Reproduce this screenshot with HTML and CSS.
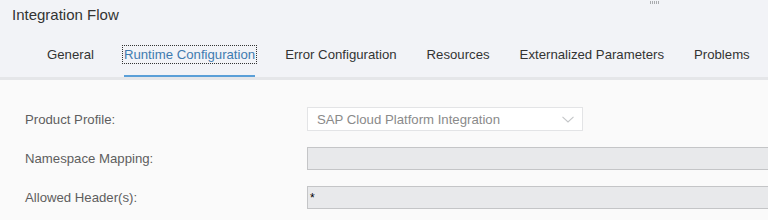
FILE: index.html
```html
<!DOCTYPE html>
<html lang="en">
<head>
    <meta charset="UTF-8">
    <meta name="viewport" content="width=device-width, initial-scale=1.0">
    <title>Integration Flow</title>
    <link rel="stylesheet" href="styles.css">
</head>
<body>
    <div class="header">
        <div class="grip"></div>
        <h1 class="title">Integration Flow</h1>
        <div class="tabs">
            <div class="tab"><span class="tab-text">General</span></div>
            <div class="tab active"><span class="tab-text"><span class="focus">Runtime Configuration</span></span></div>
            <div class="tab"><span class="tab-text">Error Configuration</span></div>
            <div class="tab"><span class="tab-text">Resources</span></div>
            <div class="tab"><span class="tab-text">Externalized Parameters</span></div>
            <div class="tab"><span class="tab-text">Problems</span></div>
        </div>
    </div>

    <div class="content">
        <div class="row">
            <div class="label">Product Profile:</div>
            <div class="select">
                <span>SAP Cloud Platform Integration</span>
                <svg class="chevron" width="12" height="7" viewBox="0 0 12 7">
                    <path d="M0.5 0.8 L6 6 L11.5 0.8" fill="none" stroke="#c4c6c8" stroke-width="1.1"/>
                </svg>
            </div>
        </div>
        <div class="row">
            <div class="label">Namespace Mapping:</div>
            <div class="input"></div>
        </div>
        <div class="row">
            <div class="label">Allowed Header(s):</div>
            <div class="input">*</div>
        </div>
    </div>
</body>
</html>
```

FILE: styles.css
```css
body {
    margin: 0;
    font-family: "Liberation Sans", Arial, sans-serif;
    background: #fafafa;
    color: #333;
    overflow: hidden;
}
.header {
    position: relative;
    background: #f2f3f7;
    border-bottom: 3px solid #e5e6e9;
}
.grip {
    position: absolute;
    left: 650px;
    top: 1px;
    width: 10px;
    height: 3px;
    background: repeating-linear-gradient(90deg, #a9abae 0 1px, transparent 1px 2px);
}
.title {
    margin: 0;
    padding: 6px 0 0 12px;
    font-size: 15px;
    font-weight: normal;
    line-height: 18px;
    color: #333;
}
.tabs {
    display: flex;
    padding: 13px 0 0 32px;
}
.tab {
    padding: 0 15px;
    font-size: 13.2px;
    color: #333;
    white-space: nowrap;
}
.tab-text {
    display: block;
    height: 38px;
    line-height: 36px;
    border-bottom: 2px solid transparent;
}
.tab.active {
    color: #3f7bb0;
}
.tab.active .tab-text {
    border-bottom-color: #5a9fd8;
}
.focus {
    outline: 1px dotted #333;
    outline-offset: 1px;
}
.content {
    padding: 27px 0 0 25px;
}
.row {
    display: flex;
    align-items: center;
    height: 24px;
    margin-bottom: 15px;
}
.label {
    width: 282px;
    flex: none;
    font-size: 13.2px;
    color: #5e5e5e;
}
.select {
    display: flex;
    align-items: center;
    justify-content: space-between;
    box-sizing: border-box;
    width: 276px;
    height: 24px;
    padding: 0 8px 0 9px;
    background: #fff;
    border: 1px solid #e3e4e6;
    font-size: 13.2px;
    color: #8a8a8a;
}
.input {
    flex: 1;
    box-sizing: border-box;
    height: 23px;
    padding-left: 2px;
    background: #e8e9eb;
    border: 1px solid #c4c5c7;
    border-right: none;
    font-size: 12px;
    line-height: 22px;
    color: #000;
}
```
